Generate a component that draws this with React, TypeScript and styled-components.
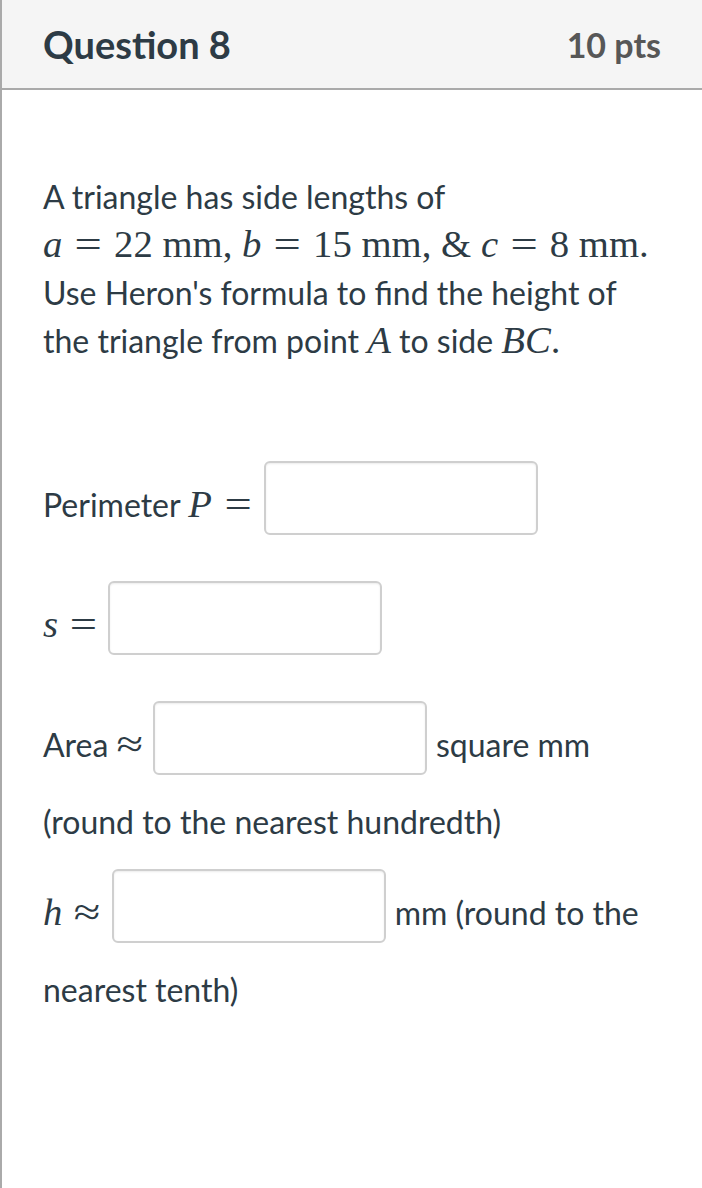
import React from "react";
import styled, { createGlobalStyle } from "styled-components";

const GlobalStyle = createGlobalStyle`
  html, body {
    margin: 0;
    padding: 0;
    background: #fff;
  }
  body {
    font-family: Lato, "Liberation Sans", sans-serif;
    color: #2d3b45;
  }
`;

const Card = styled.div`
  min-height: 1188px;
  border-left: 2px solid #aaaaaa;
  box-sizing: border-box;
`;

const Header = styled.div`
  display: flex;
  align-items: center;
  justify-content: space-between;
  height: 88px;
  padding: 0 41px 0 41px;
  background: #f5f5f5;
  border-bottom: 2px solid #aaaaaa;
`;

const Title = styled.h2`
  margin: 0;
  font-size: 38px;
  font-weight: 700;
  color: #2d3b45;
`;

const Points = styled.div`
  font-size: 34px;
  font-weight: 700;
  color: #575757;
`;

const Body = styled.div`
  padding: 83px 41px 0 41px;
  font-size: 32px;
  line-height: 48px;
`;

const Para = styled.p<{ $gap?: number }>`
  margin: 0 0 ${(p) => p.$gap ?? 0}px 0;
`;

const Math = styled.span`
  font-family: "Liberation Serif", "DejaVu Serif", serif;
  font-size: 1.21em;
  line-height: 1;
  white-space: nowrap;
`;

const Var = styled.i`
  font-style: italic;
`;

const Rel = styled.span<{ $bare?: boolean; $w?: number }>`
  display: inline-block;
  width: ${(p) => p.$w ?? 0.78}em;
  margin: 0 0.2778em 0 ${(p) => (p.$bare ? 0 : 0.2778)}em;
  text-align: center;
  transform: scaleX(1.25);
`;

const Row = styled.div<{ $gap: number }>`
  display: flex;
  align-items: center;
  margin-bottom: ${(p) => p.$gap}px;
`;

const Label = styled.span`
  margin-top: 14px;
  white-space: nowrap;
`;

const Answer = styled.input`
  box-sizing: border-box;
  width: 274px;
  height: 74px;
  border: 2px solid #cfcfcf;
  border-radius: 6px;
  box-shadow: inset 0 1px 2px rgba(0, 0, 0, 0.08);
  background: #fff;
  font-size: 28px;
  padding: 0 10px;
  flex: none;
`;

const Unit = styled.span`
  margin: 14px 0 0 9px;
  white-space: nowrap;
`;

export default function App() {
  return (
    <Card>
      <GlobalStyle />
      <Header>
        <Title>Question 8</Title>
        <Points>10 pts</Points>
      </Header>
      <Body>
        <Para $gap={96}>
          A triangle has side lengths of
          <br />
          <Math>
            <Var>a</Var>
            <Rel>=</Rel>22 mm, <Var>b</Var>
            <Rel>=</Rel>15 mm, &amp; <Var>c</Var>
            <Rel>=</Rel>8 mm.
          </Math>
          <br />
          Use Heron's formula to find the height of
          <br />
          the triangle from point{" "}
          <Math>
            <Var>A</Var>
          </Math>{" "}
          to side{" "}
          <Math>
            <Var>BC</Var>.
          </Math>
        </Para>
        <Row $gap={46}>
          <Label>
            Perimeter{" "}
            <Math>
              <Var>P</Var>
              <Rel>=</Rel>
            </Math>
          </Label>
          <Answer type="text" aria-label="Perimeter" />
        </Row>
        <Row $gap={46}>
          <Label>
            <Math>
              <Var>s</Var>
              <Rel $w={0.74}>=</Rel>
            </Math>
          </Label>
          <Answer type="text" aria-label="s" />
        </Row>
        <Row $gap={23}>
          <Label>
            Area{" "}
            <Math>
              <Rel $bare $w={0.66}>≈</Rel>
            </Math>
          </Label>
          <Answer type="text" aria-label="Area" />
          <Unit>square mm</Unit>
        </Row>
        <Para $gap={23}>(round to the nearest hundredth)</Para>
        <Row $gap={23}>
          <Label>
            <Math>
              <Var>h</Var>
              <Rel $w={0.72}>≈</Rel>
            </Math>
          </Label>
          <Answer type="text" aria-label="h" />
          <Unit>mm (round to the</Unit>
        </Row>
        <Para>nearest tenth)</Para>
      </Body>
    </Card>
  );
}
